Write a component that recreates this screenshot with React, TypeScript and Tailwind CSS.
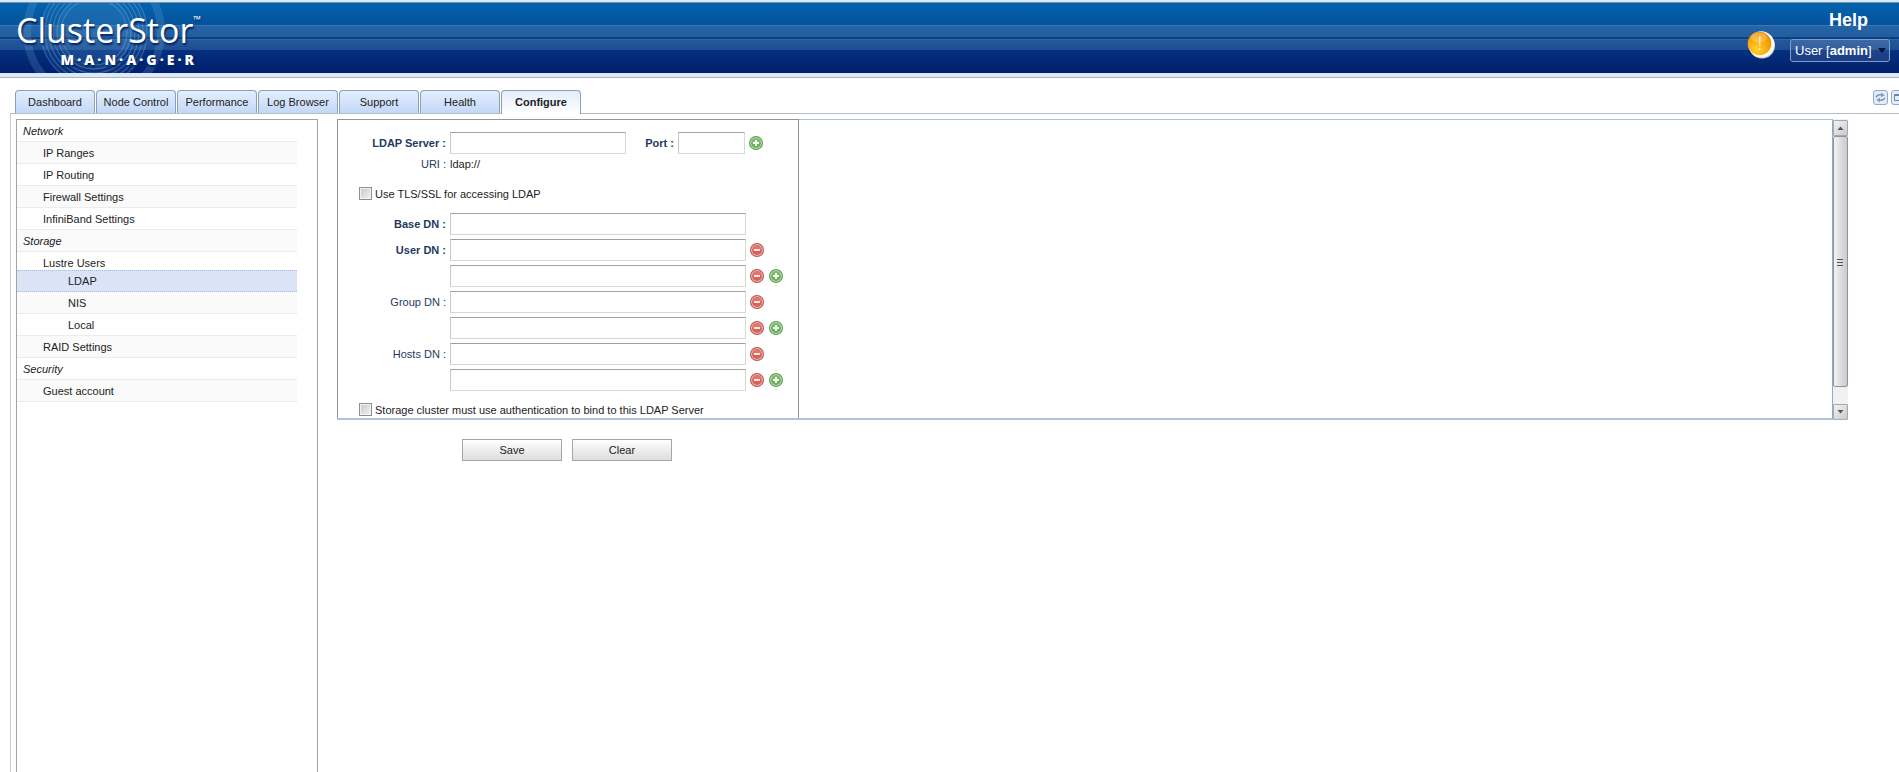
import type { ReactNode } from 'react';

const tabs = ['Dashboard', 'Node Control', 'Performance', 'Log Browser', 'Support', 'Health', 'Configure'];

type NavItem = { label: string; level: 0 | 1 | 2; active?: boolean; short?: boolean; shaded?: boolean };

const nav: NavItem[] = [
  { label: 'Network', level: 0 },
  { label: 'IP Ranges', level: 1, shaded: true },
  { label: 'IP Routing', level: 1 },
  { label: 'Firewall Settings', level: 1, shaded: true },
  { label: 'InfiniBand Settings', level: 1 },
  { label: 'Storage', level: 0, shaded: true },
  { label: 'Lustre Users', level: 1, short: true },
  { label: 'LDAP', level: 2, active: true },
  { label: 'NIS', level: 2, shaded: true },
  { label: 'Local', level: 2 },
  { label: 'RAID Settings', level: 1, shaded: true },
  { label: 'Security', level: 0 },
  { label: 'Guest account', level: 1, shaded: true },
];

const indents = ['pl-[6px] italic', 'pl-[26px]', 'pl-[51px]'];

function RoundIcon({ kind }: { kind: 'add' | 'remove' }) {
  const add = kind === 'add';
  return (
    <svg viewBox="0 0 14 14" className="block size-[14px]" aria-hidden="true">
      <circle cx="7" cy="7" r="7" fill={add ? '#579a52' : '#b8504b'} />
      <circle cx="7" cy="7" r="6" fill={add ? '#b4dcab' : '#f0b0aa'} />
      <circle cx="7" cy="7" r="5" fill={add ? '#6cb05e' : '#d8635a'} />
      <path d="M2 7a5 5 0 0 1 10 0z" fill="#fff" fillOpacity="0.12" />
      <path d={add ? 'M7 4v6M4 7h6' : 'M4 7h6'} stroke={add ? '#f4fff0' : '#fde8d8'} strokeWidth="2" fill="none" />
    </svg>
  );
}

function IconButton({ kind, label }: { kind: 'add' | 'remove'; label: string }) {
  return (
    <button type="button" aria-label={label} className="shrink-0">
      <RoundIcon kind={kind} />
    </button>
  );
}

const inputClass =
  'h-[22px] border border-t-[#a0a0a0] border-r-[#d8d8d8] border-b-[#d8d8d8] border-l-[#c8c8c8] bg-white px-1 text-[11px] outline-none';

function DnRow({ id, label, bold, remove, add, name }: {
  id: string; label?: string; name: string; bold?: boolean; remove?: boolean; add?: boolean;
}) {
  return (
    <div className="flex items-center">
      <div className={`w-[108px] shrink-0 pr-1 text-right text-[#1f3a5f] ${bold ? 'font-bold' : ''}`}>
        {label && <label htmlFor={id}>{label} :</label>}
      </div>
      <input id={id} aria-label={label ? undefined : name} className={`${inputClass} w-[296px]`} />
      <div className="flex gap-[5px] pl-1">
        {remove && <IconButton kind="remove" label={`Remove ${name}`} />}
        {add && <IconButton kind="add" label={`Add ${name}`} />}
      </div>
    </div>
  );
}

function CheckRow({ id, children }: { id: string; children: ReactNode }) {
  return (
    <div className="flex h-[13px] items-center gap-[3px] pl-[17px]">
      <input
        id={id}
        type="checkbox"
        className="size-[13px] appearance-none border border-[#8e8f8f] bg-linear-to-br from-[#c4c8d0] to-[#f4f4f4] shadow-[inset_0_0_0_1px_#f2f2f2] checked:bg-[#4a6fa5]"
      />
      <label htmlFor={id} className="text-[#222222]">{children}</label>
    </div>
  );
}

function Logo() {
  return (
    <div className="relative h-full w-[240px] overflow-hidden text-white">
      <svg viewBox="0 0 240 70" className="absolute inset-0 h-[70px] w-[240px]" fill="none" aria-hidden="true">
        <circle cx="94" cy="29" r="53" fill="#4f93cf" fillOpacity="0.12" />
        <circle cx="94" cy="29" r="38" fill="#5fa0d8" fillOpacity="0.14" />
        <circle cx="94" cy="29" r="67" stroke="#7fb2dd" strokeOpacity="0.2" strokeWidth="8" />
        <g stroke="#7fb5e2" strokeOpacity="0.34" strokeWidth="1.2">
          <circle cx="94" cy="29" r="53" />
          <circle cx="94" cy="29" r="49" />
          <circle cx="94" cy="29" r="45" />
          <circle cx="94" cy="29" r="41" />
          <circle cx="94" cy="29" r="37" />
          <circle cx="94" cy="29" r="33" />
        </g>
      </svg>
      <div className="relative flex w-[205px] flex-col pl-4 pt-1 font-['Open_Sans',sans-serif] [text-shadow:1px_2px_2px_#00205a]">
        <div className="flex items-start">
          <span className="text-[34px] leading-[46px]">ClusterStor</span>
          <span className="pt-[5px] text-[10px] leading-[14px]">™</span>
        </div>
        <div className="flex gap-[3px] self-end pr-[11px] text-[14px] font-extrabold leading-[14px]">
          {Array.from('M·A·N·A·G·E·R').map((c, i) => <span key={i}>{c}</span>)}
        </div>
      </div>
    </div>
  );
}

function Header() {
  return (
    <header className="border-b border-[#a9b4c6] bg-[#dde8f6] pb-1 pt-[2px]">
      <div className="flex h-[71px] justify-between border-t border-t-[#6f93ad] bg-[linear-gradient(to_bottom,#0262ad_0,#06529b_22px,#4a86c0_22px,#2465a6_23px,#225e9f_33px,#3c76b2_33px,#0b4487_34px,#073b7e_36px,#3f72ae_36px,#24589b_37px,#1f4f93_46px,#3b66a3_46px,#043080_47px,#001f6b_70px)]">
        <Logo />
        <div className="flex items-start pr-[9px]">
          <button type="button" aria-label="Alerts" className="mr-[14px] mt-[26px]">
            <svg viewBox="0 0 30 30" className="size-[30px]" aria-hidden="true">
              <defs>
                <radialGradient id="amber" cx="40%" cy="75%" r="75%">
                  <stop offset="0" stopColor="#ffd22e" />
                  <stop offset="0.6" stopColor="#f9a60c" />
                  <stop offset="1" stopColor="#e98c00" />
                </radialGradient>
              </defs>
              <circle cx="16" cy="16.5" r="13" fill="#d9d5ca" />
              <circle cx="15.200" cy="15.200" r="13" fill="#fffaf0" />
              <circle cx="13.500" cy="14.500" r="11.800" fill="url(#amber)" />
              <ellipse cx="13" cy="8.500" rx="8" ry="5" fill="#fff" fillOpacity="0.25" />
              <path d="M12.900 7.500h1.700l-.3 10h-1.100z" fill="#fff0a8" />
              <circle cx="13.700" cy="20" r="0.900" fill="#fff0a8" />
            </svg>
          </button>
          <div className="flex flex-col items-end gap-2">
            <a href="#help" className="mr-[22px] mt-[6px] text-[18px] font-bold leading-[22px] text-white">Help</a>
            <button
              type="button"
              aria-haspopup="menu"
              className="flex h-[23px] w-[100px] items-center justify-between rounded-[3px] border border-[#7e9cca] bg-white/10 pl-1 pr-[3px] text-[13px] text-white"
            >
              <span>User [<b>admin</b>]</span>
              <svg viewBox="0 0 8 5" className="h-[5px] w-2" aria-hidden="true"><path d="M0 0h8L4 5z" fill="#04123c" /></svg>
            </button>
          </div>
        </div>
      </div>
    </header>
  );
}

function TabBar() {
  return (
    <div className="flex h-[35px] items-end justify-between pl-[15px]">
      <nav className="flex gap-px">
        {tabs.map((t) => {
          const on = t === 'Configure';
          return (
            <a
              key={t}
              href="#tab"
              aria-current={on ? 'page' : undefined}
              className={`flex w-20 justify-center rounded-t-[4px] border border-b-0 border-[#8f9fb5] leading-[22px] text-[#222222] ${
                on
                  ? 'relative -mb-px h-6 bg-linear-to-b from-[#e3edfc] to-white font-bold'
                  : 'h-[23px] bg-linear-to-b from-[#e4eefd] to-[#c3d8f8]'
              }`}
            >
              {t}
            </a>
          );
        })}
      </nav>
      <div className="flex w-[26px] shrink-0 gap-[3px] self-start overflow-hidden pt-3">
        <button type="button" aria-label="Refresh" className="size-[15px] shrink-0 rounded-[3px] border border-[#8fabc9] bg-[#e3edf8]">
          <svg viewBox="0 0 13 13" className="size-[13px]" aria-hidden="true">
            <path d="M2.300 6.300C2.600 4.300 4.500 3.600 7.600 3.900M10.700 6.700C10.400 8.700 8.500 9.400 5.400 9.100" fill="none" stroke="#7f99b8" strokeWidth="1.500" />
            <path d="M7.200 1.500L10.700 4.200 7 6.200zM5.800 11.500L2.300 8.800 6 6.800z" fill="#7f99b8" />
          </svg>
        </button>
        <button type="button" aria-label="Maximize" className="size-[15px] shrink-0 rounded-[3px] border border-[#8fabc9] bg-[#e3edf8]">
          <svg viewBox="0 0 13 13" className="size-[13px]" fill="none" stroke="#6787ab" aria-hidden="true">
            <path d="M2.500 3.500h8v6h-8zM2.500 4.500h8" />
          </svg>
        </button>
      </div>
    </div>
  );
}

function Sidebar() {
  return (
    <aside className="w-[302px] shrink-0 border border-b-0 border-[#a3a3a3]">
      <ul className="w-[280px]">
        {nav.map((n) => (
          <li
            key={n.label}
            className={
              n.active
                ? 'h-[22px] border-y border-dotted border-[#a3bae9] bg-[#dbe4f7]'
                : n.short
                  ? 'h-[18px]'
                  : `h-[22px] border-b border-[#ebebeb] ${n.shaded ? 'bg-[#fafafa]' : ''}`
            }
          >
            <a href="#section" className={`block leading-[22px] text-[#222222] ${n.active ? '-mt-px' : ''} ${indents[n.level]}`}>
              {n.label}
            </a>
          </li>
        ))}
      </ul>
    </aside>
  );
}

function ScrollBar() {
  const cap = 'flex h-4 shrink-0 items-center justify-center rounded-[1px] border border-[#a3a8b2] bg-linear-to-br from-[#f4f4f4] to-[#c9c9cc]';
  return (
    <div className="flex w-[15px] shrink-0 flex-col bg-[#f1f1f3] pt-px">
      <button type="button" aria-label="Scroll up" className={cap}>
        <svg viewBox="0 0 7 4" className="h-1 w-[7px]" aria-hidden="true"><path d="M.5 4L3.500 .5 6.500 4z" fill="#555" /></svg>
      </button>
      <div className="mb-[17px] flex flex-1 items-center justify-center rounded-[2px] border border-[#8f949e] bg-linear-to-r from-[#f3f3f4] via-[#dedee0] to-[#cacacd]">
        <svg viewBox="0 0 7 8" className="h-2 w-[7px]" stroke="#555" aria-hidden="true"><path d="M0 1.500h6M0 4.500h6M0 7.500h6" /></svg>
      </div>
      <button type="button" aria-label="Scroll down" className={cap}>
        <svg viewBox="0 0 7 4" className="h-1 w-[7px]" aria-hidden="true"><path d="M.5 0L3.500 3.500 6.500 0z" fill="#555" /></svg>
      </button>
    </div>
  );
}

function LdapForm() {
  return (
    <form className="min-w-0 flex-1 pr-[51px]" onSubmit={(e) => e.preventDefault()}>
      <div className="flex">
        <div className="min-w-0 flex-1 border-b-2 border-r border-t border-b-[#b4c0e2] border-r-[#92a9c9] border-t-[#b4bfd6]">
          <div className="-mt-px w-[462px] border-x border-t border-[#959595] pb-[2px] pl-1 pt-3">
            <div className="flex items-center">
              <label htmlFor="server" className="w-[108px] shrink-0 pr-1 text-right font-bold text-[#1f3a5f]">LDAP Server :</label>
              <input id="server" className={`${inputClass} w-[176px]`} />
              <label htmlFor="port" className="w-[52px] shrink-0 pr-1 text-right font-bold text-[#1f3a5f]">Port :</label>
              <input id="port" className={`${inputClass} mr-1 w-[67px]`} />
              <IconButton kind="add" label="Add LDAP server" />
            </div>
            <div className="flex h-5 items-center">
              <span className="w-[108px] pr-1 text-right text-[#1f3a5f]">URI :</span>
              <span className="text-[#222222]">ldap://</span>
            </div>
            <div className="py-[13px]">
              <CheckRow id="tls">Use TLS/SSL for accessing LDAP</CheckRow>
            </div>
            <div className="flex flex-col gap-1">
              <DnRow id="base" label="Base DN" name="base DN" bold />
              <DnRow id="user1" label="User DN" name="user DN" bold remove />
              <DnRow id="user2" name="second user DN" remove add />
              <DnRow id="group1" label="Group DN" name="group DN" remove />
              <DnRow id="group2" name="second group DN" remove add />
              <DnRow id="hosts1" label="Hosts DN" name="hosts DN" remove />
              <DnRow id="hosts2" name="second hosts DN" remove add />
            </div>
            <div className="pt-3">
              <CheckRow id="auth">Storage cluster must use authentication to bind to this LDAP Server</CheckRow>
            </div>
          </div>
        </div>
        <ScrollBar />
      </div>
      <div className="flex gap-[10px] pl-[125px] pt-[19px]">
        {['Save', 'Clear'].map((b) => (
          <button key={b} type="button" className="h-[22px] w-[100px] border border-[#a6a6a6] bg-linear-to-b from-white to-[#dddddd] text-[#222222]">
            {b}
          </button>
        ))}
      </div>
    </form>
  );
}

export default function App() {
  return (
    <div className="flex min-h-screen flex-col bg-white font-['Liberation_Sans',Arial,sans-serif] text-[11px] leading-[14px]">
      <Header />
      <TabBar />
      <main className="ml-[10px] flex flex-1 gap-[19px] border-l border-t border-l-[#cccccc] border-t-[#b3bdca] pl-[5px] pt-[5px]">
        <Sidebar />
        <LdapForm />
      </main>
    </div>
  );
}
